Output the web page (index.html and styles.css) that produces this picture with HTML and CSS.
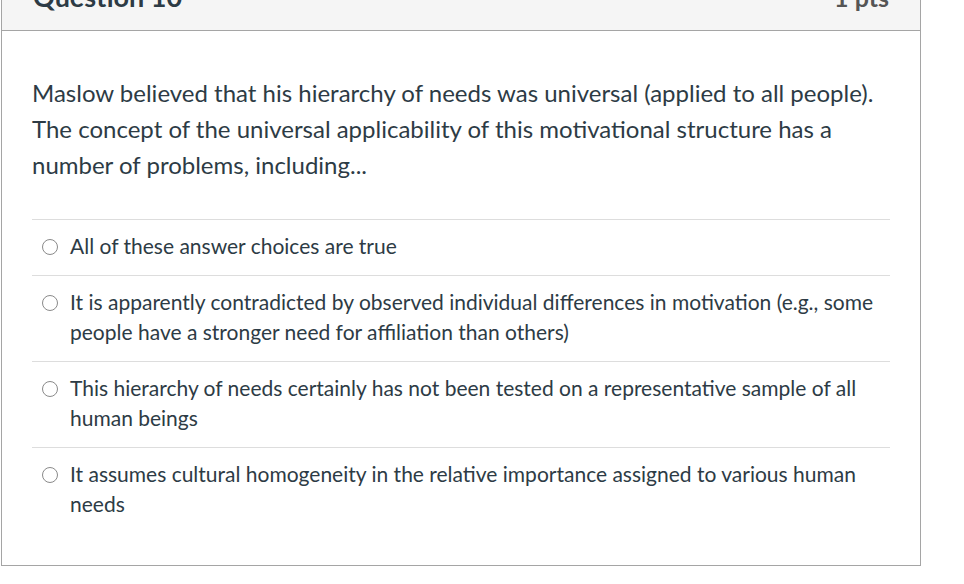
FILE: index.html
```html
<!DOCTYPE html>
<html lang="en">
<head>
<meta charset="utf-8">
<title>Question 10</title>
<link rel="stylesheet" href="styles.css">
</head>
<body>
<div class="question">
  <div class="question-header">
    <h2 class="question-title">Question 10</h2>
    <span class="question-points">1 pts</span>
  </div>
  <div class="question-body">
    <p class="question-text">Maslow believed that his hierarchy of needs was universal (applied to all people). The concept of the universal applicability of this motivational structure has a number of problems, including...</p>
    <div class="answers">
      <label class="answer"><span class="radio"></span><span class="answer-text">All of these answer choices are true</span></label>
      <label class="answer"><span class="radio"></span><span class="answer-text">It is apparently contradicted by observed individual differences in motivation (e.g., some people have a stronger need for affiliation than others)</span></label>
      <label class="answer"><span class="radio"></span><span class="answer-text">This hierarchy of needs certainly has not been tested on a representative sample of all human beings</span></label>
      <label class="answer"><span class="radio"></span><span class="answer-text">It assumes cultural homogeneity in the relative importance assigned to various human needs</span></label>
    </div>
  </div>
</div>
</body>
</html>
```
FILE: styles.css
```css
html, body {
  margin: 0;
  padding: 0;
  background: #ffffff;
}
body {
  font-family: Lato, "Noto Sans", sans-serif;
  color: #2d3b45;
}
.question {
  box-sizing: border-box;
  width: 920px;
  margin: -20px 0 0 1px;
  border: 1px solid #a5a5a5;
  border-top: none;
}
.question-header {
  display: flex;
  justify-content: space-between;
  align-items: baseline;
  background: #f5f5f5;
  border-bottom: 1px solid #a5a5a5;
  padding: 0 31px 16px 31px;
}
.question-title {
  margin: 0;
  font-size: 27px;
  font-weight: 700;
  line-height: 34px;
  color: #2d3b45;
}
.question-points {
  font-size: 25px;
  font-weight: 700;
  line-height: 34px;
  color: #555555;
}
.question-body {
  padding: 44px 30px 32px 30px;
}
.question-text {
  margin: 0;
  font-size: 24px;
  line-height: 36px;
}
.answers {
  margin-top: 36px;
}
.answer {
  display: flex;
  align-items: flex-start;
  border-top: 1px solid #dddddd;
  padding: 11px 0 14px 10px;
}
.radio {
  flex: none;
  box-sizing: border-box;
  width: 16px;
  height: 16px;
  border: 1px solid #8a8a8a;
  border-radius: 50%;
  margin: 8px 12px 0 0;
  background: #ffffff;
}
.answer-text {
  font-size: 21px;
  line-height: 30px;
}
```
